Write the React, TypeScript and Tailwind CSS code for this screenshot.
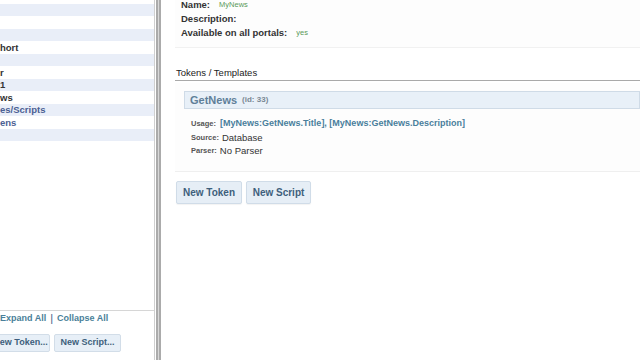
const treeRows = [
  { text: "", kind: "plain" },
  { text: "", kind: "plain" },
  { text: "", kind: "plain" },
  { text: "", kind: "plain" },
  { text: "hort", kind: "dark" },
  { text: "", kind: "plain" },
  { text: "r", kind: "dark" },
  { text: "1", kind: "dark" },
  { text: "ws", kind: "dark" },
  { text: "es/Scripts", kind: "link" },
  { text: "ens", kind: "link" },
  { text: "", kind: "plain" },
];

const font = { fontFamily: '"Liberation Sans", Arial, sans-serif' };

function Sidebar() {
  return (
    <aside className="flex h-[360px] w-[155px] shrink-0 flex-col border-r border-[#cfcfcf] bg-white">
      <div className="-mt-[9px] flex flex-col">
        {treeRows.map((row, i) => (
          <div
            key={i}
            className={`flex h-[12.5px] items-center text-[9.5px] font-bold leading-none ${
              i % 2 === 1 ? "bg-[#e9eef8]" : "bg-white"
            } ${row.kind === "link" ? "text-[#4b5f93]" : "text-[#333]"}`}
          >
            {row.text}
          </div>
        ))}
      </div>
      <div className="flex-1" />
      <div className="border-t border-[#d6d6d6] pt-px">
        <div className="flex h-[13px] items-center gap-[4px] text-[9px] font-bold text-[#4a7f99]">
          <span>Expand All</span>
          <span className="text-[11px] font-normal text-[#3b6289]">|</span>
          <span>Collapse All</span>
        </div>
        <div className="mt-[9px] mb-[8px] flex gap-[4px]">
          <div className="-ml-[9px] flex h-[18px] w-[59px] items-center justify-center rounded-[2px] border border-[#d2dde8] bg-[#e7eff7] text-[9px] font-bold text-[#3e5f7c]">
            New Token...
          </div>
          <div className="flex h-[18px] w-[67px] items-center justify-center rounded-[2px] border border-[#d2dde8] bg-[#e7eff7] text-[9px] font-bold text-[#3e5f7c]">
            New Script...
          </div>
        </div>
      </div>
    </aside>
  );
}

function Field({ label, value }: { label: string; value?: string }) {
  return (
    <div className="flex h-[14px] items-center gap-[9px]">
      <span className="text-[9.5px] font-bold text-[#333]">{label}</span>
      {value && <span className="text-[7.5px] text-[#5a9a5a]">{value}</span>}
    </div>
  );
}

export default function App() {
  return (
    <div style={font} className="flex h-[360px] w-[640px] overflow-hidden bg-white">
      <Sidebar />
      <div className="ml-px flex h-full w-[5px] shrink-0 border-x-2 border-[#ababab] bg-[#d8d8d8]" />
      <main className="flex-1 overflow-hidden pl-[14px]">
        <div className="-mt-[2px] border-b border-[#f1f1f1] bg-[#fdfdfd] pl-[6px] pb-[7px]">
          <Field label="Name:" value="MyNews" />
          <Field label="Description:" />
          <Field label="Available on all portals:" value="yes" />
        </div>

        <div className="mt-[19px] border-b border-[#a9a9a9] pb-[1px] pl-px text-[9.5px] leading-[12px] text-[#222]">
          Tokens / Templates
        </div>

        <div className="mt-[2px] border-b border-[#efefef] bg-[#fdfdfd] pl-[9px] pt-[8px] pb-[13px]">
          <div className="flex h-[18px] items-center gap-[5px] border border-[#cfdbe7] bg-[#e8f0f8] pl-[5px]">
            <span className="text-[11px] font-bold text-[#5f7f99]">GetNews</span>
            <span className="text-[8px] font-bold text-[#7a8894]">(id: 33)</span>
          </div>
          <div className="mt-[8px] flex flex-col pl-[7px]">
            <div className="flex h-[14px] items-center gap-[4px]">
              <span className="text-[7.5px] font-bold text-[#555]">Usage:</span>
              <span className="text-[9px] font-bold text-[#4a7f9c]">
                [MyNews:GetNews.Title], [MyNews:GetNews.Description]
              </span>
            </div>
            <div className="flex h-[13.5px] items-center gap-[3px]">
              <span className="text-[7.5px] font-bold text-[#555]">Source:</span>
              <span className="text-[9.5px] text-[#333]">Database</span>
            </div>
            <div className="flex h-[13px] items-center gap-[3px]">
              <span className="text-[7.5px] font-bold text-[#555]">Parser:</span>
              <span className="text-[9.5px] text-[#333]">No Parser</span>
            </div>
          </div>
        </div>

        <div className="mt-[9px] flex gap-[4px] pl-px">
          <div className="flex h-[23px] w-[66px] items-center justify-center rounded-[2px] border border-[#d0dce8] bg-[#e6eef6] text-[10px] font-bold text-[#3e5f7c] shadow-[0_1px_1px_rgba(0,0,0,0.05)]">
            New Token
          </div>
          <div className="flex h-[23px] w-[65px] items-center justify-center rounded-[2px] border border-[#d0dce8] bg-[#e6eef6] text-[10px] font-bold text-[#3e5f7c] shadow-[0_1px_1px_rgba(0,0,0,0.05)]">
            New Script
          </div>
        </div>
      </main>
    </div>
  );
}
